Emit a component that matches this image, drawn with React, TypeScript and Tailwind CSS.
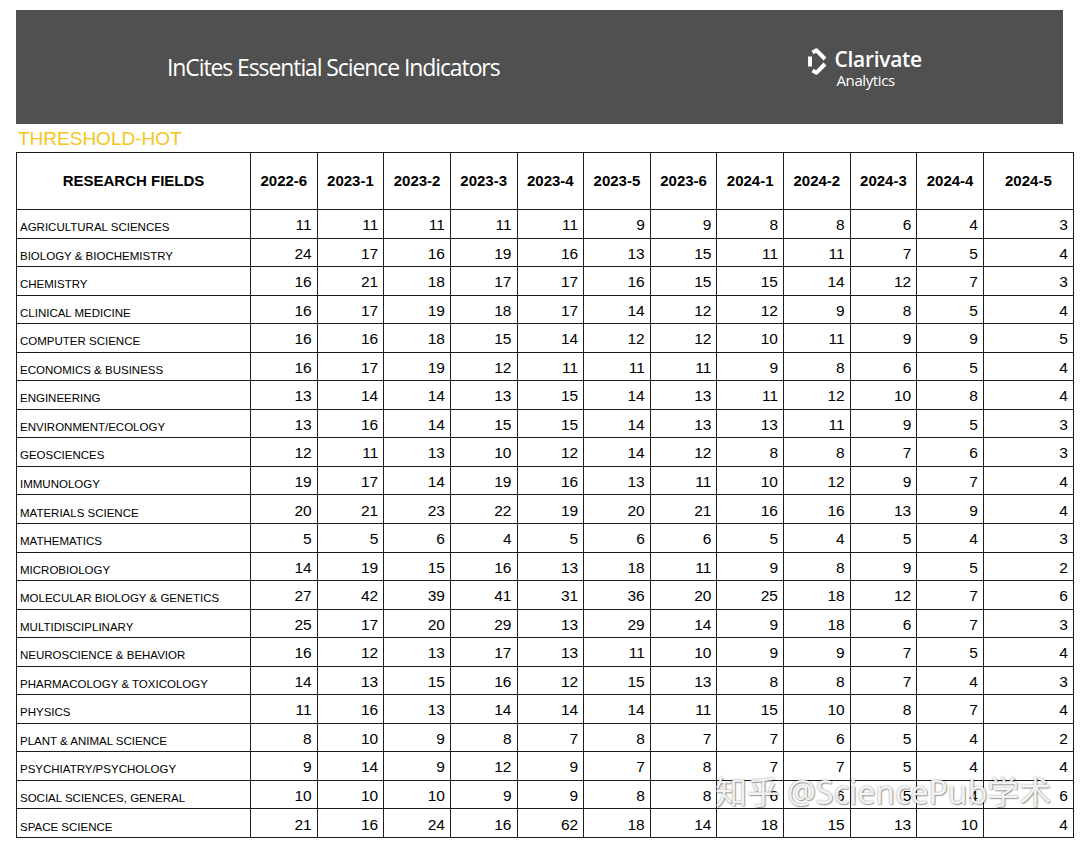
const COLS = ['2022-6', '2023-1', '2023-2', '2023-3', '2023-4', '2023-5', '2023-6', '2024-1', '2024-2', '2024-3', '2024-4', '2024-5'];

const ROWS: [string, number[]][] = [
  ['AGRICULTURAL SCIENCES', [11, 11, 11, 11, 11, 9, 9, 8, 8, 6, 4, 3]],
  ['BIOLOGY & BIOCHEMISTRY', [24, 17, 16, 19, 16, 13, 15, 11, 11, 7, 5, 4]],
  ['CHEMISTRY', [16, 21, 18, 17, 17, 16, 15, 15, 14, 12, 7, 3]],
  ['CLINICAL MEDICINE', [16, 17, 19, 18, 17, 14, 12, 12, 9, 8, 5, 4]],
  ['COMPUTER SCIENCE', [16, 16, 18, 15, 14, 12, 12, 10, 11, 9, 9, 5]],
  ['ECONOMICS & BUSINESS', [16, 17, 19, 12, 11, 11, 11, 9, 8, 6, 5, 4]],
  ['ENGINEERING', [13, 14, 14, 13, 15, 14, 13, 11, 12, 10, 8, 4]],
  ['ENVIRONMENT/ECOLOGY', [13, 16, 14, 15, 15, 14, 13, 13, 11, 9, 5, 3]],
  ['GEOSCIENCES', [12, 11, 13, 10, 12, 14, 12, 8, 8, 7, 6, 3]],
  ['IMMUNOLOGY', [19, 17, 14, 19, 16, 13, 11, 10, 12, 9, 7, 4]],
  ['MATERIALS SCIENCE', [20, 21, 23, 22, 19, 20, 21, 16, 16, 13, 9, 4]],
  ['MATHEMATICS', [5, 5, 6, 4, 5, 6, 6, 5, 4, 5, 4, 3]],
  ['MICROBIOLOGY', [14, 19, 15, 16, 13, 18, 11, 9, 8, 9, 5, 2]],
  ['MOLECULAR BIOLOGY & GENETICS', [27, 42, 39, 41, 31, 36, 20, 25, 18, 12, 7, 6]],
  ['MULTIDISCIPLINARY', [25, 17, 20, 29, 13, 29, 14, 9, 18, 6, 7, 3]],
  ['NEUROSCIENCE & BEHAVIOR', [16, 12, 13, 17, 13, 11, 10, 9, 9, 7, 5, 4]],
  ['PHARMACOLOGY & TOXICOLOGY', [14, 13, 15, 16, 12, 15, 13, 8, 8, 7, 4, 3]],
  ['PHYSICS', [11, 16, 13, 14, 14, 14, 11, 15, 10, 8, 7, 4]],
  ['PLANT & ANIMAL SCIENCE', [8, 10, 9, 8, 7, 8, 7, 7, 6, 5, 4, 2]],
  ['PSYCHIATRY/PSYCHOLOGY', [9, 14, 9, 12, 9, 7, 8, 7, 7, 5, 4, 4]],
  ['SOCIAL SCIENCES, GENERAL', [10, 10, 10, 9, 9, 8, 8, 6, 6, 5, 4, 6]],
  ['SPACE SCIENCE', [21, 16, 24, 16, 62, 18, 14, 18, 15, 13, 10, 4]],
];

function ClarivateMark() {
  return (
    <svg width="21" height="27" viewBox="0 0 21 27" fill="none" stroke="white" strokeWidth="4" strokeLinejoin="round">
      <path d="M3 8.5 V18.5" />
      <path d="M5.5 4.5 L9.5 2.3 L18 11" />
      <path d="M5.5 22.5 L9.5 24.7 L18 16" />
    </svg>
  );
}

export default function App() {
  return (
    <div className="min-h-[844px] w-[1080px] bg-white pt-[10px] font-['Liberation_Sans',Arial,sans-serif] text-black">
      {/* Banner */}
      <div className="ml-4 flex h-[114px] w-[1047px] items-center bg-[#505050]">
        <h1 className="ml-[151px] font-['Open_Sans',sans-serif] text-[23px] leading-none tracking-[-1.1px] text-white">
          InCites Essential Science Indicators
        </h1>
        <div className="ml-[307px] flex items-start gap-[7px] pt-[1px]">
          <div className="pt-[1px]"><ClarivateMark /></div>
          <div className="flex flex-col font-['Open_Sans',sans-serif] text-white">
            <span className="text-[21px] font-semibold leading-[25px] tracking-[-0.3px]">Clarivate</span>
            <span className="ml-[2px] text-[15px] leading-[17px] tracking-[-0.4px]">Analytics</span>
          </div>
        </div>
      </div>

      {/* Section title */}
      <div className="flex h-[28px] items-center pl-[18px] text-[19px] leading-none text-[#f5c518]">THRESHOLD-HOT</div>

      {/* Table */}
      <div className="relative ml-4 w-[1057px]">
        <table className="w-[1057px] table-fixed border-collapse">
          <colgroup>
            <col className="w-[234px]" />
            {COLS.slice(0, 11).map(c => <col key={c} className="w-[66.64px]" />)}
            <col className="w-[90px]" />
          </colgroup>
          <thead>
            <tr className="h-[57px]">
              <th className="border-[1.5px] border-[#1c1c1c] text-center align-middle text-[15px] font-bold">RESEARCH FIELDS</th>
              {COLS.map(c => (
                <th key={c} className="border-[1.5px] border-[#1c1c1c] text-center align-middle text-[15px] font-bold">{c}</th>
              ))}
            </tr>
          </thead>
          <tbody>
            {ROWS.map(([name, vals]) => (
              <tr key={name} className="h-[28.55px]">
                <td className="border-[1.5px] border-[#1c1c1c] pb-[4px] pl-[3px] align-bottom text-[11.5px] leading-none whitespace-nowrap">{name}</td>
                {vals.map((v, i) => (
                  <td key={i} className="border-[1.5px] border-[#1c1c1c] pb-[5px] pr-[5px] text-right align-bottom text-[15.5px] leading-none">{v}</td>
                ))}
              </tr>
            ))}
          </tbody>
        </table>

        {/* Watermark */}
        <div className="pointer-events-none absolute left-[699px] top-[624px] font-['Noto_Sans','Noto_Sans_CJK_SC',sans-serif] text-[32px] leading-none whitespace-nowrap text-white/90 [text-shadow:0_0_2px_rgba(0,0,0,0.45),1px_1px_1px_rgba(0,0,0,0.3)]">
          知乎 @SciencePub学术
        </div>
      </div>
    </div>
  );
}
